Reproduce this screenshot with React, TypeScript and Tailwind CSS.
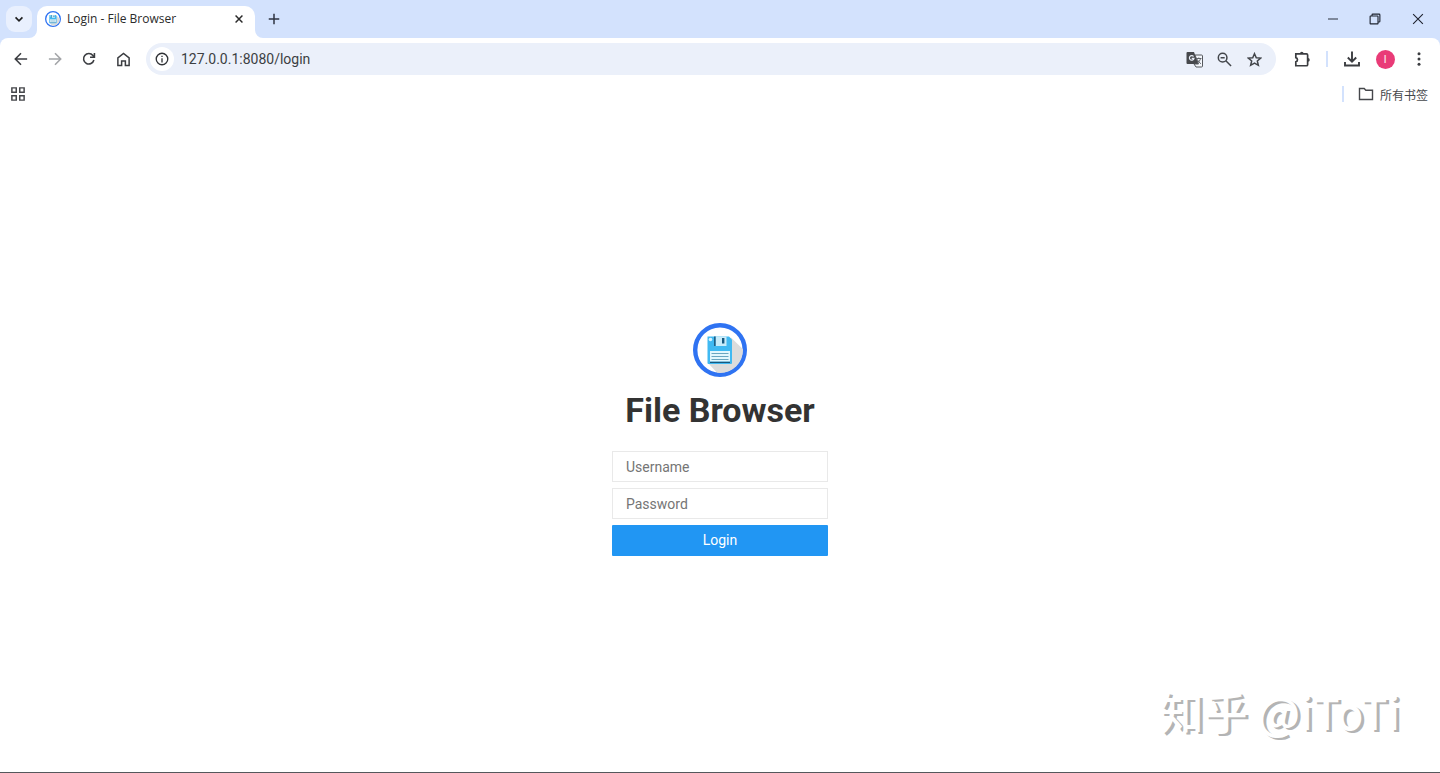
import { useId, useState } from "react";
import type { FormEvent, ReactNode } from "react";

interface IconButtonProps {
  label: string;
  className?: string;
  children: ReactNode;
}

const IconButton = ({ label, className = "", children }: IconButtonProps) => {
  return (
    <button
      type="button"
      aria-label={label}
      className={`flex items-center justify-center shrink-0 ${className}`}
    >
      {children}
    </button>
  );
};

interface IconProps {
  size?: number;
  stroke?: number;
  children: ReactNode;
}

// 16 unit grid, stroked
const Icon = ({ size = 16, stroke = 1.5, children }: IconProps) => (
  <svg
    width={size}
    height={size}
    viewBox="0 0 16 16"
    fill="none"
    stroke="currentColor"
    strokeWidth={stroke}
    aria-hidden="true"
  >
    {children}
  </svg>
);

const FloppyLogo = ({ className }: { className: string }) => {
  const clipId = useId();

  return (
    <svg viewBox="0 0 54 54" className={className} aria-hidden="true">
      <clipPath id={clipId}>
        <circle cx="27" cy="27" r="23" />
      </clipPath>
      <circle cx="27" cy="27" r="24.8" fill="#fff" stroke="#2f73f2" strokeWidth="4.4" />
      <path
        d="M38 14.5L54 30V54H28L15 40z"
        fill="#dcdcdc"
        clipPath={`url(#${clipId})`}
      />
      <path d="M14.5 13.5h21.500l3 3V40a1 1 0 0 1-1 1H15.500a1 1 0 0 1-1-1z" fill="#40b9f2" />
      <path d="M17 38.500h20V40H17z" fill="#17587e" />
      <path d="M21 13.5h1.800V23H21z" fill="#1f5f86" />
      <path d="M22.800 13.5H33.500V23H22.800z" fill="#c9ecfa" />
      <path d="M29 15h2.400v5.500H29z" fill="#17587e" />
      <circle cx="17.500" cy="16.5" r="1.800" fill="#d4f3ff" />
      <path d="M17 28h20v10.500H17z" fill="#e3f6fd" />
      <path d="M18.500 30.5h17M18.500 33.500h17M18.500 36.500h17" stroke="#6aa5c0" strokeWidth="1" />
    </svg>
  );
};

const TabStrip = () => {
  return (
    <div className="flex items-stretch h-[38px] bg-[#d3e2fd] pl-1.5">
      <IconButton
        label="搜索标签页"
        className="mt-1.5 size-[26px] rounded-[9px] bg-[#e9f0fe] text-[#1f1f1f]"
      >
        <Icon size={10} stroke={2.6}>
          <path d="M2.5 5.5L8 11l5.5-5.5" />
        </Icon>
      </IconButton>

      <div className="relative ml-[5px] mt-1.5 flex w-[218px] items-center rounded-t-[10px] bg-white pl-2 pr-2.5 pb-1.5 text-[#2b2b2b]">
        {/* outward curves at the foot of the tab */}
        <svg
          viewBox="0 0 8 8"
          className="absolute -left-2 bottom-0 size-2"
          aria-hidden="true"
        >
          <path d="M8 0v8H0a8 8 0 0 0 8-8z" fill="#fff" />
        </svg>
        <svg
          viewBox="0 0 8 8"
          className="absolute -right-2 bottom-0 size-2"
          aria-hidden="true"
        >
          <path d="M0 0v8h8a8 8 0 0 1-8-8z" fill="#fff" />
        </svg>
        <FloppyLogo className="size-4 shrink-0" />
        <span className="ml-1.5 flex-1 truncate text-[12px] leading-4 font-['Open_Sans','Noto_Sans',sans-serif]">
          Login - File Browser
        </span>
        <IconButton label="关闭标签页" className="size-3">
          <Icon size={10} stroke={2.4}>
            <path d="M2.500 2.500l11 11M13.500 2.500l-11 11" />
          </Icon>
        </IconButton>
      </div>

      <IconButton label="新建标签页" className="ml-2 size-[22px] mt-2 text-[#2f3542]">
        <Icon size={12} stroke={2}>
          <path d="M8 1v14M1 8h14" />
        </Icon>
      </IconButton>

      <div className="ml-auto flex items-center text-[#1f2430]">
        <IconButton label="最小化" className="h-full w-[43px]">
          <Icon size={10}>
            <path d="M0 8h16" />
          </Icon>
        </IconButton>
        <IconButton label="还原" className="h-full w-[42px]">
          <Icon size={12} stroke={1.5}>
            <rect x="1.5" y="4" width="10.5" height="10.5" rx=".5" />
            <path d="M4 4V2.500A1 1 0 0 1 5 1.500h8.500a1 1 0 0 1 1 1V11a1 1 0 0 1-1 1H12" />
          </Icon>
        </IconButton>
        <IconButton label="关闭" className="h-full w-11">
          <Icon size={12} stroke={1.5}>
            <path d="M1.500 1.500l13 13M14.500 1.500l-13 13" />
          </Icon>
        </IconButton>
      </div>
    </div>
  );
};

const AddressBar = () => {
  const [address, setAddress] = useState("127.0.0.1:8080/login");

  return (
    <div className="ml-1.5 flex h-8 flex-1 items-center rounded-full bg-[#ebf0fa] pl-1 pr-[7px] text-[#43464b]">
      <IconButton label="查看网站信息" className="size-6 rounded-full bg-white text-[#303236]">
        <Icon size={14}>
          <circle cx="8" cy="8" r="6.600" />
          <path d="M8 7v5M8 4.200v1.600" />
        </Icon>
      </IconButton>
      <input
        aria-label="地址"
        value={address}
        onChange={e => setAddress(e.target.value)}
        className="ml-[7px] flex-1 bg-transparent text-[14px] leading-5 text-[#3c3f43] outline-none font-[Roboto,sans-serif]"
      />
      <IconButton label="翻译此页" className="size-[30px]">
        <svg width="17" height="17" viewBox="0 0 17 17" aria-hidden="true">
          <path d="M1.500 1H8l4.500 12H1.500A1 1 0 0 1 .5 12V2a1 1 0 0 1 1-1z" fill="#46484c" />
          <path d="M9 4h6.500a1 1 0 0 1 1 1v10a1 1 0 0 1-1 1H10l-2-3h4.500z" fill="#f4f7fc" stroke="#55585d" />
          <path
            d="M7.600 5.500A2.300 2.300 0 1 0 8 7.300H5.700"
            fill="none"
            stroke="#ebf0fa"
            strokeWidth="1.200"
          />
          <path
            d="M10.500 7.500h5M12.800 6.500v1M14.500 7.500c-.4 2-1.700 3.600-3.200 4.500M11.500 8.500c.6 1.700 2 3.200 3.500 4.300"
            fill="none"
            stroke="#55585d"
            strokeWidth=".9"
          />
        </svg>
      </IconButton>
      <IconButton label="缩放" className="size-[30px]">
        <Icon size={15} stroke={1.600}>
          <circle cx="6" cy="6" r="4.600" />
          <path d="M9.400 9.400L15 15M3.800 6h4.400" />
        </Icon>
      </IconButton>
      <IconButton label="为此标签页添加书签" className="size-[30px]">
        <Icon size={15} stroke={1.600}>
          <path d="M8 1.800l1.900 4.300 4.700.4-3.600 3.100 1.100 4.600L8 11.800l-4.100 2.400L5 9.600 1.400 6.500l4.700-.4z" />
        </Icon>
      </IconButton>
    </div>
  );
};

const Toolbar = () => {
  return (
    <div className="flex h-[42px] items-center px-1 text-[#3b3d41]">
      <IconButton label="返回" className="size-[34px]">
        <Icon size={14} stroke={1.800}>
          <path d="M15 8H2M8 1.500L1.500 8 8 14.500" />
        </Icon>
      </IconButton>
      <IconButton label="前进" className="size-[34px] text-[#a3a5a8]">
        <Icon size={14} stroke={1.800}>
          <path d="M1 8h13M8 1.500L14.500 8 8 14.500" />
        </Icon>
      </IconButton>
      <IconButton label="重新加载" className="size-[34px]">
        <Icon size={14} stroke={1.800}>
          <path d="M13.600 9.200A6 6 0 1 1 12.500 4l1.700 1.800M14.200 1v5H9.200" />
        </Icon>
      </IconButton>
      <IconButton label="主页" className="size-[34px]">
        <Icon size={15} stroke={1.600}>
          <path d="M2 14.500V6.300L8 1.500l6 4.800v8.200h-4V9.700H6v4.800z" />
        </Icon>
      </IconButton>
      <AddressBar />
      <IconButton label="扩展程序" className="ml-2.5 size-8">
        <Icon size={18} stroke={1.500}>
          <path d="M2.500 3.500H12a1 1 0 0 1 1 1V13a1 1 0 0 1-1 1H2.500V10.500a1.900 1.900 0 0 0 0-3.700z" />
          <path
            d="M6.200 3.200a1.600 1.600 0 0 1 3.200 0zM13.300 7.200a1.600 1.600 0 0 1 0 3.200z"
            fill="currentColor"
            stroke="none"
          />
        </Icon>
      </IconButton>
      <span className="mx-2 h-4 w-0.5 bg-[#d3e2fd]" />
      <IconButton label="下载内容" className="size-8">
        <Icon size={16} stroke={1.900}>
          <path d="M8 .5v10M3.800 6.500L8 10.700l4.200-4.200M1 11v3.500h14V11" />
        </Icon>
      </IconButton>
      <IconButton label="个人资料" className="size-[34px]">
        <span className="flex size-[19px] items-center justify-center rounded-full bg-[#e93b77] text-[10px] text-white font-[Roboto,sans-serif]">
          I
        </span>
      </IconButton>
      <IconButton label="自定义及控制" className="size-[34px]">
        <Icon size={16}>
          <g fill="currentColor" stroke="none">
            <circle cx="8" cy="2.800" r="1.500" />
            <circle cx="8" cy="8" r="1.500" />
            <circle cx="8" cy="13.200" r="1.500" />
          </g>
        </Icon>
      </IconButton>
    </div>
  );
};

const BookmarkBar = () => {
  return (
    <div className="flex h-7 items-center justify-between pl-2.5 pr-3 text-[#45474b]">
      <IconButton label="应用" className="size-4">
        <Icon size={14} stroke={1.700}>
          <path d="M1 1h5v5H1zM10 1h5v5h-5zM1 10h5v5H1zM10 10h5v5h-5z" />
        </Icon>
      </IconButton>
      <div className="flex items-center">
        <span className="mr-3.5 h-4 w-0.5 bg-[#d3e2fd]" />
        <button type="button" className="flex items-center gap-1.5">
          <Icon size={16} stroke={1.400}>
            <path d="M1.500 2.500h4.700l1.600 1.700h6.700v9.300h-13z" />
          </Icon>
          <span className="pt-0.5 text-[12px] leading-4 font-['Noto_Sans_CJK_SC',sans-serif]">
            所有书签
          </span>
        </button>
      </div>
    </div>
  );
};

const LoginForm = () => {
  const [username, setUsername] = useState("");
  const [password, setPassword] = useState("");

  const onSubmit = (e: FormEvent) => {
    e.preventDefault();
  };

  return (
    <form
      onSubmit={onSubmit}
      className="flex w-[216px] flex-col items-center text-[14px] font-[Roboto,sans-serif]"
    >
      <FloppyLogo className="size-[54px]" />
      <h1 className="mt-3 mb-5 whitespace-nowrap text-[34px] leading-[42px] font-bold text-[#333]">
        File Browser
      </h1>
      <input
        type="text"
        aria-label="Username"
        placeholder="Username"
        value={username}
        onChange={e => setUsername(e.target.value)}
        className="mb-1.5 h-[31px] w-full border border-[#e9e9e9] px-[13px] outline-none placeholder:text-[#757575]"
      />
      <input
        type="password"
        aria-label="Password"
        placeholder="Password"
        value={password}
        onChange={e => setPassword(e.target.value)}
        className="mb-1.5 h-[31px] w-full border border-[#e9e9e9] px-[13px] outline-none placeholder:text-[#757575]"
      />
      <button type="submit" className="h-[31px] w-full rounded-[1px] bg-[#2196f3] text-white">
        Login
      </button>
    </form>
  );
};

export default function App() {
  return (
    <div className="flex min-h-screen flex-col border-b border-[#55585c] bg-[#d3e2fd]">
      <TabStrip />
      <div className="flex flex-1 flex-col rounded-t-[8px] bg-white">
        <Toolbar />
        <BookmarkBar />
        <main className="relative flex flex-1 flex-col items-center justify-center pb-px">
          <LoginForm />
          <p className="absolute right-10 bottom-[34px] text-[44px] leading-[54px] font-medium text-white [text-shadow:3px_2px_0_#b4b4b4] font-['Noto_Sans_CJK_SC',sans-serif]">
            知乎 @iToTi
          </p>
        </main>
      </div>
    </div>
  );
}
